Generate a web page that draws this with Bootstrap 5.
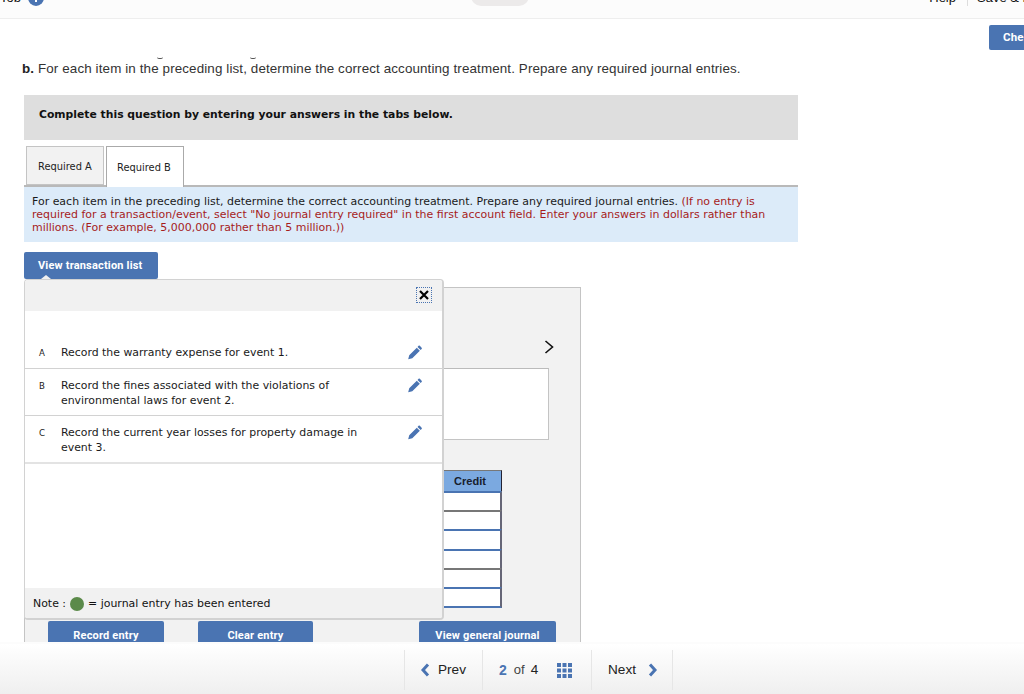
<!DOCTYPE html>
<html lang="en">
<head>
<meta charset="utf-8">
<title>Required B</title>
<link href="https://cdn.jsdelivr.net/npm/bootstrap@5.3.0/dist/css/bootstrap.min.css" rel="stylesheet">
<style>
html,body{height:694px;overflow:hidden;background:#fff}
body{font-family:"DejaVu Sans","Liberation Sans",sans-serif;color:#111}
.shell{height:694px;overflow:hidden}
.topbar{height:19px;background:#fcfcfc;border-bottom:1px solid #eee;overflow:hidden;font-family:"Liberation Sans",sans-serif;font-size:13px}
.topside{width:560px;height:18px}
.clip-text{line-height:16px;margin-top:-10px}
.info-dot{width:16px;height:17px;border-radius:50%;background:#4a74b2;margin-top:-11px;margin-left:7px;display:flex;justify-content:center;align-items:flex-end}
.info-dot::after{content:"";width:2px;height:4px;background:#fff;margin-bottom:4px}
.pill{width:58px;height:17px;border-radius:0 0 10px 10px;background:#eceaea;margin-top:-11px;margin-left:427px}
.help-gap{margin-left:11px;margin-right:9px}
.divider{width:1px;height:6px;background:#ddd}
.save-clip{width:47px;overflow:hidden}
.stage{height:623px;overflow:hidden}
.check-row{height:33px}
.blue-btn{background:#4a74b2;color:#fff;font-family:Roboto,"Liberation Sans",sans-serif;font-weight:700;font-size:11px;letter-spacing:.18px;border-radius:2px;border:0}
.blue-btn:hover{background:#4a74b2;color:#fff}
.check-btn{width:35px;height:25px;margin-top:6px;font-size:11.5px;padding:0 0 0 14px;text-align:left;white-space:nowrap;overflow:hidden;border-radius:2px 0 0 2px}
.question{font-family:"Liberation Sans",sans-serif;font-size:13.4px;letter-spacing:.12px;color:#333;margin:0 0 0 22px;height:43px;line-height:18px;padding-top:5px}
.question b{color:#222}
.ghost-row{height:3px}
.ghost{width:6px;height:2px;border-bottom:1px solid #555;border-radius:0 0 3px 3px}
.ghost-a{margin-left:135px}.ghost-b{margin-left:87px}
.instruct{width:774px;height:45px;margin-left:24px;background:#dedede;font-size:10.8px;font-weight:700;padding-left:15px;padding-bottom:4px;color:#111}
.tabset{margin-left:24px;width:774px;height:47px;padding:6px 0 0 2px;gap:2px;border-bottom:2px solid #b9b9b9}
.tabitem{width:78px;font-size:9.9px;border:1px solid #c4c4c4;color:#222}
.tab-off{background:#f2f2f2;padding-top:13px;padding-left:11px}
.tab-on{background:#fff;padding-top:14px;padding-left:10px;border-bottom:0;margin-bottom:-2px;border-color:#aaa}
.explain{margin-left:24px;width:774px;height:55px;background:#dcebf9;font-size:10.97px;line-height:13px;padding:8px 8px 0 8px;color:#1a1a1a}
.explain span{color:#a61c1c}
.workarea{margin-left:24px;margin-top:10px;width:557px;height:400px}
.trans-btn{width:134px;height:27px;display:block;text-align:left;padding:2px 0 0 14px;white-space:nowrap}
.under-panel{margin-top:8px;height:355px;width:557px;background:#f2f2f2;border:1px solid #c4c4c4;border-bottom:0;position:relative}
.chev-row{height:80px;padding:52px 26px 0 0;align-items:flex-start}
.answer-box{height:72px;width:524px;background:#fff;border:1px solid #c4c4c4;border-top-color:#bbb}
.credit-wrap{margin-top:30px;padding-right:78px;height:151px;align-items:flex-start}
.credit{width:61px;border-collapse:separate;border-spacing:0;margin:0}
.credit th{height:21px;background:#7ba9e0;border:1px solid #4a74b2;border-top-color:#777;border-bottom:0;border-right-color:#223;text-align:center;font-family:"Liberation Sans",sans-serif;font-size:11px;color:#17202c;padding:0 3px 1px 0;line-height:14px}
.credit td{height:19.2px;padding:0;font-size:0;line-height:0;background:#fff;border:1px solid #4a74b2;border-top:2px solid #4a74b2;border-bottom:0;border-right:2px solid #667}
.credit tr:nth-child(3) td,.credit tr:nth-child(6) td{border-top-color:#777}
.credit tr:last-child td{border-bottom:2px solid #4a74b2;height:21px}
.action-row{padding-left:23px;height:25px}
.act{height:25px;padding:4px 0 0;text-align:center;border-radius:2px 2px 0 0;line-height:13px}
.act-a{width:116px}.act-b{width:115px;margin-left:34px}.act-c{width:137px;margin-left:106px}
.popup{position:absolute;left:0;top:27px;width:420px;height:341px;background:#fff;border:1px solid #d2d2d2;border-right-width:2px;border-bottom-width:2px;border-radius:4px;overflow:hidden}
.notch{position:absolute;left:17px;top:23px;width:0;height:0;border:5px solid transparent;border-top:0;border-bottom:4px solid #f1f1f1;z-index:2}
.pop-head{height:31px;background:#f1f1f1;padding:7px 10px 0 0}
.close-x{width:16px;height:16px;border:1px dotted #4a74b2;line-height:0}
.pop-list{padding-top:30px}
.entry{border-bottom:1px solid #d2d2d2;font-size:10.9px;line-height:15px;padding:4px 20px 7px 0;color:#1a1a1a}
.entry-tall{padding-top:9px;padding-bottom:7px}
.entry-last{border-bottom-width:2px;border-bottom-color:#e3e3e3}
.ltr{width:36px;font-size:8.6px;text-align:center;padding-right:2px;padding-top:1px}
.entry-text{width:320px}
.pen{width:14px;height:15px;margin-left:auto;fill:#4a74b2}
.gap-fill{flex:1 1 auto}
.note-bar{height:30px;background:#f1f1f1;font-size:10.95px;padding-left:8px;padding-top:2px}
.green-dot{width:14px;height:14px;border-radius:50%;background:#5b8a4a;margin:0 4px}
.footbar{height:52px;background:linear-gradient(#fff,#efefef);border-top:2px solid #fcfcfc;font-family:"Liberation Sans",sans-serif;font-size:13.6px;color:#222;padding-top:6px;padding-left:404px}
.fcell{height:40px;border-left:1px solid #e6e6e6}
.f-prev{width:78px;padding-left:15px}.f-mid{width:109px;padding-left:16px}.f-next{width:82px;padding-left:16px;border-right:1px solid #e6e6e6}
.f-num{color:#4a74b2;font-weight:700;font-size:14px}
.f-of{font-size:13px;color:#444;margin:0 6px 0 7px}
.f-total{font-size:13.5px}
.f-grid{width:15px;height:15px;fill:#4a74b2;margin-left:19px}
.f-chev{width:10px;height:14px;fill:none;stroke:#4a74b2;stroke-width:3}
</style>
</head>
<body>
<div class="shell d-flex flex-column">
  <div class="topbar d-flex justify-content-between">
    <div class="topside d-flex">
      <span class="clip-text">Tob</span>
      <span class="info-dot"></span>
      <span class="pill"></span>
    </div>
    <div class="d-flex">
      <span class="clip-text">Help</span>
      <span class="divider help-gap"></span>
      <span class="clip-text save-clip text-nowrap">Save &amp; Exit</span>
    </div>
  </div>
  <div class="stage">
    <div class="check-row d-flex justify-content-end">
      <button class="btn blue-btn check-btn" type="button">Check my work</button>
    </div>
    <div class="question">
      <div class="ghost-row d-flex"><span class="ghost ghost-a"></span><span class="ghost ghost-b"></span></div>
      <b>b.</b> For each item in the preceding list, determine the correct accounting treatment. Prepare any required journal entries.
    </div>
    <div class="instruct d-flex align-items-center">Complete this question by entering your answers in the tabs below.</div>
    <div class="tabset d-flex">
      <div class="tabitem tab-off">Required A</div>
      <div class="tabitem tab-on">Required B</div>
    </div>
    <div class="explain">For each item in the preceding list, determine the correct accounting treatment. Prepare any required journal entries. <span>(If no entry is required for a transaction/event, select "No journal entry required" in the first account field. Enter your answers in dollars rather than millions. (For example, 5,000,000 rather than 5 million.))</span></div>
    <div class="workarea position-relative">
      <button class="btn blue-btn trans-btn" type="button">View transaction list</button>
      <div class="under-panel">
        <div class="chev-row d-flex justify-content-end">
          <svg width="10" height="14" viewBox="0 0 10 14" fill="none" stroke="#111" stroke-width="1.6"><path d="M1.500 1l7 6-7 6"/></svg>
        </div>
        <div class="answer-box"></div>
        <div class="credit-wrap d-flex justify-content-end">
          <table class="credit">
            <tr><th>Credit</th></tr>
            <tr><td></td></tr><tr><td></td></tr><tr><td></td></tr><tr><td></td></tr><tr><td></td></tr><tr><td></td></tr>
          </table>
        </div>
        <div class="action-row d-flex">
          <button class="btn blue-btn act act-a" type="button">Record entry</button>
          <button class="btn blue-btn act act-b" type="button">Clear entry</button>
          <button class="btn blue-btn act act-c" type="button">View general journal</button>
        </div>
      </div>
      <span class="notch"></span>
      <div class="popup d-flex flex-column">
        <div class="pop-head d-flex justify-content-end">
          <span class="close-x d-flex align-items-center justify-content-center">
            <svg width="10" height="10" viewBox="0 0 10 10" stroke="#000" stroke-width="2.200"><path d="M1 1l8 8M9 1l-8 8"/></svg>
          </span>
        </div>
        <div class="pop-list">
          <div class="entry d-flex"><span class="ltr">A</span><span class="entry-text">Record the warranty expense for event 1.</span>
            <svg class="pen" viewBox="0 0 15 15"><path d="M.2 14.800L1.300 10.400 9.400 2.300l3.300 3.300-8.100 8.100zM10.200 1.500l1.100-1.100a1 1 0 0 1 1.400 0l1.900 1.900a1 1 0 0 1 0 1.400l-1.100 1.100z"/></svg></div>
          <div class="entry entry-tall d-flex"><span class="ltr">B</span><span class="entry-text">Record the fines associated with the violations of environmental laws for event 2.</span>
            <svg class="pen" viewBox="0 0 15 15"><path d="M.2 14.800L1.300 10.400 9.400 2.300l3.300 3.300-8.100 8.100zM10.200 1.500l1.100-1.100a1 1 0 0 1 1.400 0l1.900 1.900a1 1 0 0 1 0 1.400l-1.100 1.100z"/></svg></div>
          <div class="entry entry-tall entry-last d-flex"><span class="ltr">C</span><span class="entry-text">Record the current year losses for property damage in event 3.</span>
            <svg class="pen" viewBox="0 0 15 15"><path d="M.2 14.800L1.300 10.400 9.400 2.300l3.300 3.300-8.100 8.100zM10.200 1.500l1.100-1.100a1 1 0 0 1 1.400 0l1.900 1.900a1 1 0 0 1 0 1.400l-1.100 1.100z"/></svg></div>
        </div>
        <div class="gap-fill"></div>
        <div class="note-bar d-flex align-items-center">Note :<span class="green-dot"></span>= journal entry has been entered</div>
      </div>
    </div>
  </div>
  <div class="footbar d-flex">
    <div class="fcell f-prev d-flex align-items-center gap-2">
      <svg class="f-chev" viewBox="0 0 10 14"><path d="M8 1.500L3 7l5 5.500"/></svg><span>Prev</span>
    </div>
    <div class="fcell f-mid d-flex align-items-center">
      <span class="f-num">2</span><span class="f-of">of</span><span class="f-total">4</span>
      <svg class="f-grid" viewBox="0 0 15 15"><path d="M0 0h4v4H0zM5.500 0h4v4h-4zM11 0h4v4h-4zM0 5.500h4v4H0zM5.500 5.500h4v4h-4zM11 5.500h4v4h-4zM0 11h4v4H0zM5.500 11h4v4h-4zM11 11h4v4h-4z"/></svg>
    </div>
    <div class="fcell f-next d-flex align-items-center gap-2">
      <span>Next</span><svg class="f-chev ms-1" viewBox="0 0 10 14"><path d="M2 1.500L7 7l-5 5.500"/></svg>
    </div>
  </div>
</div>
</body>
</html>
